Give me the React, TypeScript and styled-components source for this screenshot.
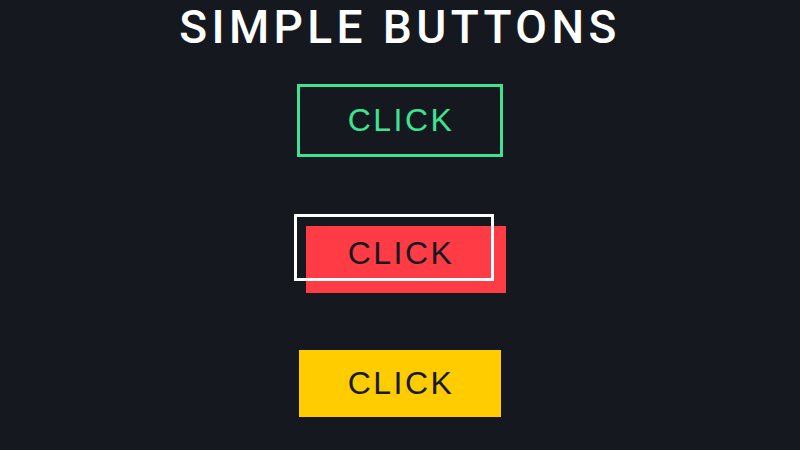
import React from 'react';
import styled, { createGlobalStyle } from 'styled-components';

const GlobalStyle = createGlobalStyle`
  html, body {
    margin: 0;
    padding: 0;
    background: #15191f;
  }

  body {
    font-family: 'Liberation Sans', Arial, sans-serif;
  }
`;

const Page = styled.div`
  display: flex;
  flex-direction: column;
  align-items: center;
  width: 800px;
  height: 450px;
  overflow: hidden;
  background: #15191f;
`;

const Title = styled.h1`
  margin: 0;
  padding-top: 4px;
  font-family: Roboto, 'Liberation Sans', sans-serif;
  font-weight: 500;
  font-size: 46px;
  line-height: 1;
  letter-spacing: 4.4px;
  color: #ffffff;
`;

const ButtonList = styled.div`
  display: flex;
  flex-direction: column;
  align-items: center;
  gap: 63px;
  margin-top: 34px;
`;

const BaseButton = styled.button`
  display: flex;
  align-items: center;
  justify-content: center;
  box-sizing: border-box;
  padding: 0 0 0 2px;
  border: none;
  background: none;
  font-family: 'Liberation Sans', Arial, sans-serif;
  font-size: 32px;
  letter-spacing: 2.5px;
  cursor: pointer;
`;

const OutlineButton = styled(BaseButton)`
  width: 206px;
  height: 73px;
  border: 3px solid #3ee392;
  color: #3ee392;
`;

const ShadowButton = styled(BaseButton)`
  position: relative;
  isolation: isolate;
  width: 200px;
  height: 67px;
  color: #16191f;

  &::before,
  &::after {
    content: '';
    position: absolute;
    inset: 0;
  }

  &::before {
    z-index: -2;
    background: #ff3b45;
    transform: translate(6px, 6px);
  }

  &::after {
    z-index: -1;
    border: 3px solid #ffffff;
    transform: translate(-6px, -6px);
  }
`;

const FilledButton = styled(BaseButton)`
  width: 202px;
  height: 67px;
  background: #ffcc00;
  color: #16191f;
`;

const App = (): JSX.Element => (
  <Page>
    <GlobalStyle />
    <Title>SIMPLE BUTTONS</Title>
    <ButtonList>
      <OutlineButton>CLICK</OutlineButton>
      <ShadowButton>CLICK</ShadowButton>
      <FilledButton>CLICK</FilledButton>
    </ButtonList>
  </Page>
);

export default App;
